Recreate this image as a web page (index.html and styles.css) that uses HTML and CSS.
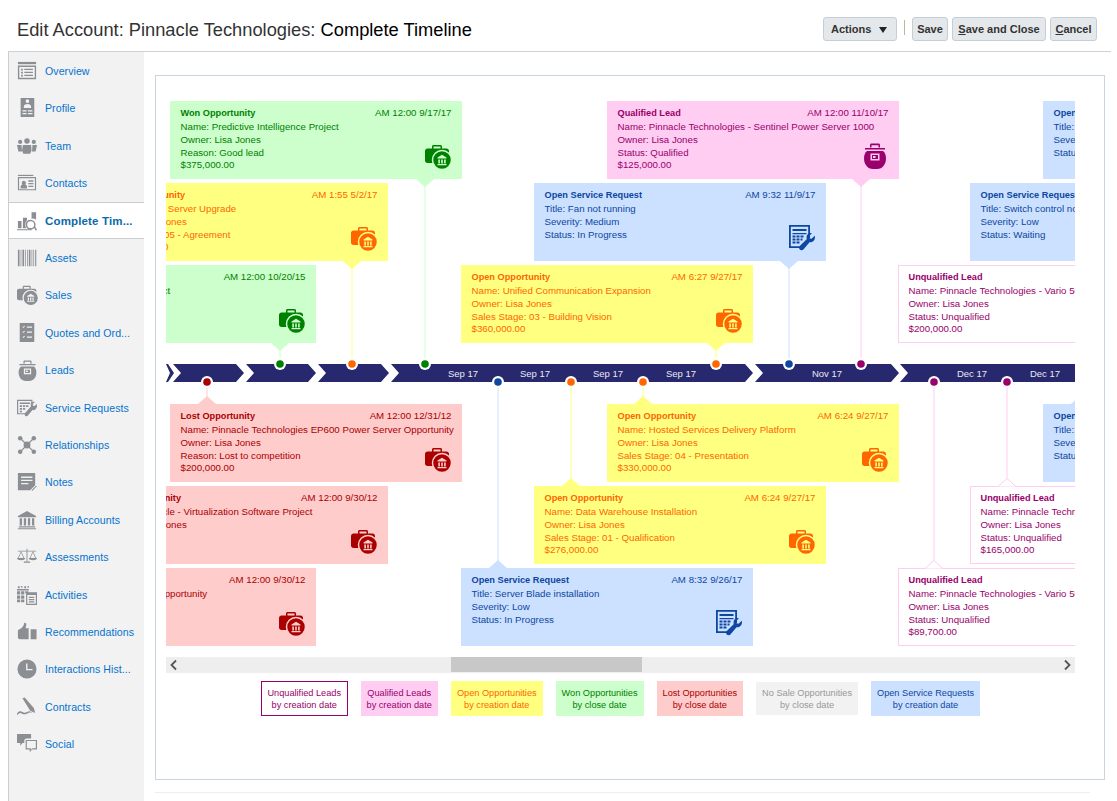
FILE: index.html
```html
<!DOCTYPE html>
<html lang="en">
<head>
    <meta charset="UTF-8">
    <meta name="viewport" content="width=device-width, initial-scale=1.0">
    <title>Edit Account: Complete Timeline</title>
    <link rel="stylesheet" href="styles.css">
</head>
<body>

    <!-- Shared icons -->
    <svg class="icon-defs" width="0" height="0">
        <defs>
            <symbol id="i-sale" viewBox="0 0 26 24">
                <path d="M7 4V1.5C7 .7 7.7 0 8.500 0h7c.8 0 1.500.7 1.500 1.500V4h-1.500V1.600h-7V4z"/>
                <path d="M2.500 3.500h19c1.400 0 2.500 1.100 2.500 2.500v12H2.500C1.100 18 0 16.900 0 15.500V6c0-1.400 1.100-2.500 2.500-2.500z"/>
                <circle cx="17" cy="15" r="9.500" stroke="var(--card-bg)" stroke-width="1.500"/>
                <path d="M12.500 12.500L17 9.800l4.500 2.700v1h-9zM13.300 14.500h1.600v4h-1.600zM16.200 14.500h1.600v4h-1.600zM19.100 14.500h1.600v4h-1.600zM12.500 19h9v1.200h-9z" fill="var(--card-bg)"/>
            </symbol>
            <symbol id="i-lead" viewBox="0 0 22 26">
                <path d="M6 4.500V2c0-.8.600-1.500 1.500-1.500h7c.9 0 1.500.7 1.500 1.500v2.500h-1.500V2.200h-7v2.300zM1 5h20v1.400H1z"/>
                <path d="M3 8h16c1.800 1.500 3 4 3 7.500 0 5.500-3.500 10.500-9 10.500H9c-5.500 0-9-5-9-10.500C0 12 1.200 9.500 3 8z"/>
                <path d="M6.500 10.500h9v7h-9zM8 12v4h6v-4zM9 13h2.500v2H9z" fill-rule="evenodd" fill="var(--card-bg)"/>
            </symbol>
            <symbol id="i-service" viewBox="0 0 26 26">
                <path d="M0 0h21v13h-1.800V1.800H1.800v19.400h9.700V23H0z"/>
                <path d="M3.500 4h14v2h-14zM3.500 8h14v1.200h-14zM3.500 10.500h3v2h-3zM7.500 10.500h3v2h-3zM11.500 10.500h3v2h-3zM3.500 13.500h3v2h-3zM7.500 13.500h3v2h-3zM11.500 13.500h2v2h-2zM3.500 16.500h3v2h-3zM7.500 16.500h3v2h-3z"/>
                <path d="M25.800 10.800l-3.300 3-2.100-.5-.5-2 3-3.100c-2.800-.7-5.400 1.300-5.400 4 0 .7.100 1.300.4 1.800L10.800 21c-1 1-1 2.500 0 3.500s2.600 1 3.600 0l6.100-7.300c3 .8 6.300-2 5.300-6.400z"/>
            </symbol>

            <symbol id="n-overview" viewBox="0 0 22 22">
                <path d="M1 1h20v2.500H1z"/>
                <path fill-rule="evenodd" d="M1 5h20v15H1zM2.500 6.500v12h17v-12z"/>
                <path d="M4.500 8.500h2v2h-2zM8 8.500h9.500v1.500H8zM4.500 11.800h2v2h-2zM8 11.800h9.500v1.500H8zM4.500 15h2v2h-2zM8 15h9.500v1.500H8z"/>
            </symbol>
            <symbol id="n-profile" viewBox="0 0 22 22">
                <path fill-rule="evenodd" d="M4 0h15v21H4zM9.500 3.500a2 2 0 1 0 4 0 2 2 0 1 0-4 0zM7.500 11h8V9.500c0-1.500-1.500-2.800-4-2.800s-4 1.300-4 2.800zM6 13.500v1.300h4.500v-1.300zM12 13.500v1.300h5v-1.300zM6 16.500v1.300h4.500v-1.300zM12 16.500v1.300h5v-1.300z"/>
            </symbol>
            <symbol id="n-team" viewBox="0 0 22 22">
                <circle cx="3.500" cy="6.500" r="2.300"/><circle cx="18.500" cy="6.500" r="2.300"/><circle cx="11" cy="5.500" r="3"/>
                <path d="M0 10h5l.5 7H1.500zM17 10h5l-1.500 7h-4zM6.500 10h9l.5 6-1.500 3.500h-7.500L5.500 16z"/>
            </symbol>
            <symbol id="n-contacts" viewBox="0 0 22 22">
                <path d="M1 2h17v1.300H1z"/>
                <path fill-rule="evenodd" d="M1 4.500h20V19H1zM2.300 5.800v12h17.400v-12zM4 17h7v-2c0-1.300-1-2.200-2-2.400a2.300 2.300 0 1 0-3 0c-1 .2-2 1.100-2 2.400z"/>
                <path d="M12.500 8h5.500v1.500h-5.500zM12.500 11h5.500v1.500h-5.500zM12.500 14h5.500v1.500h-5.500z"/>
            </symbol>
            <symbol id="n-timeline" viewBox="0 0 22 22">
                <path d="M1 11h4v8H1zM6.500 7.500h4.500v2.800a6 6 0 0 0-2 4.700c0 1.500.5 2.900 1.300 4H6.500zM16 1.500h5v8.200a6 6 0 0 0-5-1.200zM0 20h16v1.300H0z"/>
                <path fill-rule="evenodd" d="M15 9.500a5.500 5.500 0 1 1-.1 11 5.500 5.500 0 0 1 .1-11zM15 11.200a3.800 3.800 0 1 0 0 7.600 3.800 3.800 0 0 0 0-7.600z"/>
                <path d="M18.500 18l1.300-1.200 2.200 3.700-1.300 1.200z"/>
            </symbol>
            <symbol id="n-assets" viewBox="0 0 22 22">
                <path d="M1 2h1.800v18H1zM4 2h.8v18H4zM6 2h1.800v18H6zM9 2h.8v18H9zM11 2h.8v18H11zM13 2h1.800v18H13zM16 2h.8v18H16zM18 2h.8v18H18zM20 2h1.200v18H20z"/>
            </symbol>
            <symbol id="n-quotes" viewBox="0 0 22 22">
                <path fill-rule="evenodd" d="M3 0h16v21H3zM6 4.500l1 1 1.800-1.800-.6-.6L7 4.200l-.4-.4zM11 3.800v1.300h5.500V3.800zM6 10l1 1 1.800-1.800-.6-.6L7 9.700l-.4-.4zM11 9.300v1.300h5.500V9.300zM6 15.500l1 1 1.800-1.800-.6-.6L7 15.200l-.4-.4zM11 14.800v1.300h5.500v-1.300z"/>
            </symbol>
            <symbol id="n-service" viewBox="0 0 22 22">
                <path d="M0 2h17v9h-1.300V3.300H1.300v13.400h8V18H0z"/>
                <path d="M3 5h11.500v1.500H3zM3 8h2.500v1.800H3zM6.500 8H9v1.800H6.500zM10 8h2.500v1.800H10zM3 11h2.500v1.800H3zM6.500 11H9v1.800H6.500zM3 14h2.500v1.800H3z"/>
                <path d="M22 6.500l-2.700 2.300-1.800-.4-.4-1.600 2.500-2.500c-2.300-.6-4.500 1.100-4.500 3.300 0 .6.100 1.100.3 1.500L9 16.500c-.8.800-.8 2 0 2.900s2.200.8 3-.1l5-6c2.500.7 5.800-1.800 5-6.800z"/>
            </symbol>
            <symbol id="n-relationships" viewBox="0 0 22 22">
                <path d="M4.500 3.500L11 10 17.500 3.500l1 1L12 11l6.500 6.500-1 1L11 12l-6.500 6.500-1-1L10 11 3.500 4.500z"/>
                <circle cx="11" cy="11" r="3.800"/><circle cx="3.500" cy="3.500" r="2.500"/><circle cx="18.500" cy="3.500" r="2.500"/><circle cx="3.500" cy="18.500" r="2.500"/><circle cx="18.500" cy="18.500" r="2.500"/>
            </symbol>
            <symbol id="n-notes" viewBox="0 0 22 22">
                <path fill-rule="evenodd" d="M1 1h19v13.500L14.500 20H1zM4.500 5v1.500h12.500V5zM4.500 8.500V10h12.500V8.500zM4.500 12v1.500h8V12z"/>
                <path d="M16 20l5-5 .8.800-5 5z"/>
            </symbol>
            <symbol id="n-billing" viewBox="0 0 22 22">
                <path d="M11 1l10 5.500v1.500H1V6.500zM3 9h2.500v8H3zM7.500 9H10v8H7.500zM12 9h2.500v8H12zM16.500 9H19v8h-2.500zM2 18h18v1.300H2zM1 20h20v1.300H1z"/>
            </symbol>
            <symbol id="n-assessments" viewBox="0 0 22 22">
                <path d="M1 4h20v1H1zM10.500 2h1v14h-1z"/>
                <path d="M4.500 4.500L1 12h.9l2.600-6 2.600 6H8zM17.500 4.500L14 12h.9l2.600-6 2.600 6h.9z"/>
                <path d="M0 12h9c0 1.500-2 2.500-4.500 2.500S0 13.500 0 12zM13 12h9c0 1.500-2 2.500-4.500 2.500S13 13.500 13 12zM7.500 16h7v1.200h-7z"/>
            </symbol>
            <symbol id="n-activities" viewBox="0 0 22 22">
                <path d="M1 1.500h2v2H1zM4.500 1h1.500v2H4.500zM8 1.500h2v2H8zM11.500 1h1.500v2h-1.500z"/>
                <path d="M0 4.500h13V6H0zM0 7h3.500v3.500H0zM4.500 7H8v3.500H4.500zM9 7h3.500v2H9zM0 11.500h3.500V15H0zM4.500 11.500H8V15H4.500zM0 16h3.500v3H0zM4.500 16H8v3H4.500z"/>
                <path fill-rule="evenodd" d="M10 8h12v14H10zM11.300 11v9.700h9.400V11zM13 13h6v1.200h-6zM13 15.500h6v1.200h-6zM13 18h6v1.200h-6z"/>
            </symbol>
            <symbol id="n-recommendations" viewBox="0 0 22 22">
                <path d="M8 1c1.500-.4 2.500.6 2.200 2.200L9.500 7h3.300v12H3.500C2 19 1 18 1 16.500V10c0-1 .7-1.700 1.700-2 2.300-.8 4.800-3.500 5.300-7z"/>
                <path d="M15 8h6.500v11H15z"/>
            </symbol>
            <symbol id="n-interactions" viewBox="0 0 22 22">
                <path fill-rule="evenodd" d="M11 .5a10.500 10.500 0 1 1 0 21 10.500 10.500 0 0 1 0-21zM10 5v7.500h7V11h-5.500V5z"/>
            </symbol>
            <symbol id="n-contracts" viewBox="0 0 22 22">
                <path d="M6 1.500L8.500.5l10 11.500 1.500 5.500-5.500-2.500z"/>
                <path d="M0 18c2-2.500 4-2.800 6-1.500 2 1.300 3.500 1 5 0 2-1.200 3.500-.8 5 .5l1.500 1c-2-.5-3-1.500-5-.5s-4.500 2.500-7 .8C3.500 17 2 18 .5 20z"/>
            </symbol>
            <symbol id="n-social" viewBox="0 0 22 22">
                <path d="M0 0h15.500v5H10.500c-1.500 0-2.500 1-2.500 2.500v2.500H6L3.500 13v-3H0z"/>
                <path fill-rule="evenodd" d="M9.500 6.500H22V17h-5.500L14 20v-3H9.500zM10.800 7.800v7.900h4.500v1.500l1.700-1.500h3.700V7.800z"/>
            </symbol>
        </defs>
    </svg>

    <!-- Page title and buttons -->
    <header class="page-header">
        <h1 class="page-title">Edit Account: Pinnacle Technologies: <span class="page-title-current">Complete Timeline</span></h1>
        <div class="toolbar">
            <button class="btn btn-actions">Actions <span class="caret"></span></button>
            <span class="toolbar-sep"></span>
            <button class="btn btn-save">Save</button>
            <button class="btn btn-close"><u>S</u>ave and Close</button>
            <button class="btn btn-cancel"><u>C</u>ancel</button>
        </div>
    </header>

    <div class="page-body">
        <!-- Left tabs -->
        <nav class="side-nav">
            <a class="nav-item"><svg class="nav-icon"><use href="#n-overview"/></svg>Overview</a>
            <a class="nav-item"><svg class="nav-icon"><use href="#n-profile"/></svg>Profile</a>
            <a class="nav-item"><svg class="nav-icon"><use href="#n-team"/></svg>Team</a>
            <a class="nav-item"><svg class="nav-icon"><use href="#n-contacts"/></svg>Contacts</a>
            <a class="nav-item nav-item-active"><svg class="nav-icon"><use href="#n-timeline"/></svg>Complete Tim...</a>
            <a class="nav-item"><svg class="nav-icon"><use href="#n-assets"/></svg>Assets</a>
            <a class="nav-item"><svg class="nav-icon nav-icon-sale"><use href="#i-sale"/></svg>Sales</a>
            <a class="nav-item"><svg class="nav-icon"><use href="#n-quotes"/></svg>Quotes and Ord...</a>
            <a class="nav-item"><svg class="nav-icon nav-icon-sale"><use href="#i-lead"/></svg>Leads</a>
            <a class="nav-item"><svg class="nav-icon"><use href="#n-service"/></svg>Service Requests</a>
            <a class="nav-item"><svg class="nav-icon"><use href="#n-relationships"/></svg>Relationships</a>
            <a class="nav-item"><svg class="nav-icon"><use href="#n-notes"/></svg>Notes</a>
            <a class="nav-item"><svg class="nav-icon"><use href="#n-billing"/></svg>Billing Accounts</a>
            <a class="nav-item"><svg class="nav-icon"><use href="#n-assessments"/></svg>Assessments</a>
            <a class="nav-item"><svg class="nav-icon"><use href="#n-activities"/></svg>Activities</a>
            <a class="nav-item"><svg class="nav-icon"><use href="#n-recommendations"/></svg>Recommendations</a>
            <a class="nav-item"><svg class="nav-icon"><use href="#n-interactions"/></svg>Interactions Hist...</a>
            <a class="nav-item"><svg class="nav-icon"><use href="#n-contracts"/></svg>Contracts</a>
            <a class="nav-item"><svg class="nav-icon"><use href="#n-social"/></svg>Social</a>
        </nav>

        <main class="main">
            <section class="timeline-box">
                <div class="timeline">

                    <div class="card won row-a" style="left:4px">
                        <div class="card-head"><b>Won Opportunity</b><span>AM 12:00 9/17/17</span></div>
                        <div>Name: Predictive Intelligence Project</div>
                        <div>Owner: Lisa Jones</div>
                        <div>Reason: Good lead</div>
                        <div>$375,000.00</div>
                        <svg class="card-icon"><use href="#i-sale"/></svg>
                    </div>
                    <div class="card open row-b" style="left:-70px">
                        <div class="card-head"><b>Open Opportunity</b><span>AM 1:55 5/2/17</span></div>
                        <div>Name: Power Server Upgrade</div>
                        <div>Owner: Lisa Jones</div>
                        <div>Sales Stage: 05 - Agreement</div>
                        <div>$1,250,000.00</div>
                        <svg class="card-icon"><use href="#i-sale"/></svg>
                    </div>
                    <div class="card won row-c" style="left:-142px">
                        <div class="card-head"><b>Won Opportunity</b><span>AM 12:00 10/20/15</span></div>
                        <div>Name: Enterprise Blade Project</div>
                        <div>Owner: Lisa Jones</div>
                        <div>Reason: Price</div>
                        <div>$90,000.00</div>
                        <svg class="card-icon"><use href="#i-sale"/></svg>
                    </div>

                    <div class="card qualified row-a" style="left:441px">
                        <div class="card-head"><b>Qualified Lead</b><span>AM 12:00 11/10/17</span></div>
                        <div>Name: Pinnacle Technologies - Sentinel Power Server 1000</div>
                        <div>Owner: Lisa Jones</div>
                        <div>Status: Qualified</div>
                        <div>$125,000.00</div>
                        <svg class="card-icon card-icon-lead"><use href="#i-lead"/></svg>
                    </div>
                    <div class="card service row-b" style="left:368px">
                        <div class="card-head"><b>Open Service Request</b><span>AM 9:32 11/9/17</span></div>
                        <div>Title: Fan not running</div>
                        <div>Severity: Medium</div>
                        <div>Status: In Progress</div>
                        <svg class="card-icon card-icon-service"><use href="#i-service"/></svg>
                    </div>
                    <div class="card open row-c" style="left:295px">
                        <div class="card-head"><b>Open Opportunity</b><span>AM 6:27 9/27/17</span></div>
                        <div>Name: Unified Communication Expansion</div>
                        <div>Owner: Lisa Jones</div>
                        <div>Sales Stage: 03 - Building Vision</div>
                        <div>$360,000.00</div>
                        <svg class="card-icon"><use href="#i-sale"/></svg>
                    </div>

                    <div class="card service row-a" style="left:877px">
                        <div class="card-head"><b>Open Service Request</b><span>AM 9:40 12/1/17</span></div>
                        <div>Title: Power supply fault</div>
                        <div>Severity: High</div>
                        <div>Status: In Progress</div>
                    </div>
                    <div class="card service row-b" style="left:804px">
                        <div class="card-head"><b>Open Service Request</b><span>AM 9:40 12/1/17</span></div>
                        <div>Title: Switch control not responding</div>
                        <div>Severity: Low</div>
                        <div>Status: Waiting</div>
                    </div>
                    <div class="card unqualified row-c" style="left:732px">
                        <div class="card-head"><b>Unqualified Lead</b><span>AM 12:00 12/8/17</span></div>
                        <div>Name: Pinnacle Technologies - Vario 5000 Series</div>
                        <div>Owner: Lisa Jones</div>
                        <div>Status: Unqualified</div>
                        <div>$200,000.00</div>
                    </div>

                    <div class="card lost row-d" style="left:4px">
                        <div class="card-head"><b>Lost Opportunity</b><span>AM 12:00 12/31/12</span></div>
                        <div>Name: Pinnacle Technologies EP600 Power Server Opportunity</div>
                        <div>Owner: Lisa Jones</div>
                        <div>Reason: Lost to competition</div>
                        <div>$200,000.00</div>
                        <svg class="card-icon"><use href="#i-sale"/></svg>
                    </div>
                    <div class="card lost row-e" style="left:-70px">
                        <div class="card-head"><b>Lost Opportunity</b><span>AM 12:00 9/30/12</span></div>
                        <div>Name: Pinnacle - Virtualization Software Project</div>
                        <div>Owner: Lisa Jones</div>
                        <svg class="card-icon"><use href="#i-sale"/></svg>
                    </div>
                    <div class="card lost row-f" style="left:-142px">
                        <div class="card-head"><b>Lost Opportunity</b><span>AM 12:00 9/30/12</span></div>
                        <div>Name: Pinnacle Technology Opportunity</div>
                        <svg class="card-icon"><use href="#i-sale"/></svg>
                    </div>

                    <div class="card open row-d" style="left:441px">
                        <div class="card-head"><b>Open Opportunity</b><span>AM 6:24 9/27/17</span></div>
                        <div>Name: Hosted Services Delivery Platform</div>
                        <div>Owner: Lisa Jones</div>
                        <div>Sales Stage: 04 - Presentation</div>
                        <div>$330,000.00</div>
                        <svg class="card-icon"><use href="#i-sale"/></svg>
                    </div>
                    <div class="card open row-e" style="left:368px">
                        <div class="card-head"><b>Open Opportunity</b><span>AM 6:24 9/27/17</span></div>
                        <div>Name: Data Warehouse Installation</div>
                        <div>Owner: Lisa Jones</div>
                        <div>Sales Stage: 01 - Qualification</div>
                        <div>$276,000.00</div>
                        <svg class="card-icon"><use href="#i-sale"/></svg>
                    </div>
                    <div class="card service row-f" style="left:295px">
                        <div class="card-head"><b>Open Service Request</b><span>AM 8:32 9/26/17</span></div>
                        <div>Title: Server Blade installation</div>
                        <div>Severity: Low</div>
                        <div>Status: In Progress</div>
                        <svg class="card-icon card-icon-service"><use href="#i-service"/></svg>
                    </div>

                    <div class="card service row-d" style="left:877px">
                        <div class="card-head"><b>Open Service Request</b><span>AM 9:40 12/1/17</span></div>
                        <div>Title: Power supply fault</div>
                        <div>Severity: High</div>
                        <div>Status: In Progress</div>
                    </div>
                    <div class="card unqualified row-e" style="left:804px">
                        <div class="card-head"><b>Unqualified Lead</b><span>AM 12:00 12/8/17</span></div>
                        <div>Name: Pinnacle Technologies - Vario 5000</div>
                        <div>Owner: Lisa Jones</div>
                        <div>Status: Unqualified</div>
                        <div>$165,000.00</div>
                    </div>
                    <div class="card unqualified row-f" style="left:732px">
                        <div class="card-head"><b>Unqualified Lead</b><span>AM 12:00 12/8/17</span></div>
                        <div>Name: Pinnacle Technologies - Vario 5000 Series</div>
                        <div>Owner: Lisa Jones</div>
                        <div>Status: Unqualified</div>
                        <div>$89,700.00</div>
                    </div>

                    <!-- Axis, connectors and markers, in page coordinates -->
                    <svg class="axis" viewBox="166 91 909 566">
                        <g class="band">
                            <polygon points="166,364 168,364 174,373 168,382 166,382 170,373"/>
                            <polygon points="173,364 236,364 244,373 236,382 173,382 181,373"/>
                            <polygon points="246,364 308,364 316,373 308,382 246,382 254,373"/>
                            <polygon points="318,364 381,364 389,373 381,382 318,382 326,373"/>
                            <polygon points="391,364 745,364 753,373 745,382 391,382 399,373"/>
                            <polygon points="755,364 891,364 899,373 891,382 755,382 763,373"/>
                            <polygon points="900,364 1075,364 1075,382 900,382 908,373"/>
                        </g>
                        <g class="axis-dates">
                            <text x="463" y="377">Sep 17</text>
                            <text x="535" y="377">Sep 17</text>
                            <text x="608" y="377">Sep 17</text>
                            <text x="681" y="377">Sep 17</text>
                            <text x="827" y="377">Nov 17</text>
                            <text x="972" y="377">Dec 17</text>
                            <text x="1045" y="377">Dec 17</text>
                        </g>

                        <g class="link link-won">
                            <path class="arrow" d="M271 343h18l-9 8z"/><path d="M280 349V364"/>
                            <path class="arrow" d="M416 179h18l-9 8z"/><path d="M425 185V364"/>
                            <circle class="ring" cx="280" cy="364" r="6"/><circle class="dot" cx="280" cy="364" r="3.800"/>
                            <circle class="ring" cx="425" cy="364" r="6"/><circle class="dot" cx="425" cy="364" r="3.800"/>
                        </g>
                        <g class="link link-open">
                            <path class="arrow" d="M343 261h18l-9 8z"/><path d="M352 267V364"/>
                            <path class="arrow" d="M707 343h18l-9 8z"/><path d="M716 349V364"/>
                            <path class="arrow" d="M634 404h18l-9-8z"/><path d="M643 382V398"/>
                            <path class="arrow" d="M562 486h18l-9-8z"/><path d="M571 382V480"/>
                            <circle class="ring" cx="352" cy="364" r="6"/><circle class="dot" cx="352" cy="364" r="3.800"/>
                            <circle class="ring" cx="716" cy="364" r="6"/><circle class="dot" cx="716" cy="364" r="3.800"/>
                            <circle class="ring" cx="643" cy="382" r="6"/><circle class="dot" cx="643" cy="382" r="3.800"/>
                            <circle class="ring" cx="571" cy="382" r="6"/><circle class="dot" cx="571" cy="382" r="3.800"/>
                        </g>
                        <g class="link link-service">
                            <path class="arrow" d="M780 261h18l-9 8z"/><path d="M789 267V364"/>
                            <path class="arrow" d="M489 568h18l-9-8z"/><path d="M498 382V562"/>
                            <path class="arrow" d="M1071 404h18l-9-8z"/>
                            <circle class="ring" cx="789" cy="364" r="6"/><circle class="dot" cx="789" cy="364" r="3.800"/>
                            <circle class="ring" cx="498" cy="382" r="6"/><circle class="dot" cx="498" cy="382" r="3.800"/>
                        </g>
                        <g class="link link-lost">
                            <path class="arrow" d="M198 404h18l-9-8z"/><path d="M207 382V398"/>
                            <circle class="ring" cx="207" cy="382" r="6"/><circle class="dot" cx="207" cy="382" r="3.800"/>
                        </g>
                        <g class="link link-lead">
                            <path class="arrow" d="M852 179h18l-9 8z"/><path d="M861 185V364"/>
                            <path class="arrow arrow-outline" d="M998 486.500l9-8 9 8"/><path d="M1007 382V478"/>
                            <path class="arrow arrow-outline" d="M925 568.500l9-8 9 8"/><path d="M934 382V560"/>
                            <circle class="ring" cx="861" cy="364" r="6"/><circle class="dot" cx="861" cy="364" r="3.800"/>
                            <circle class="ring" cx="934" cy="382" r="6"/><circle class="dot" cx="934" cy="382" r="3.800"/>
                            <circle class="ring" cx="1007" cy="382" r="6"/><circle class="dot" cx="1007" cy="382" r="3.800"/>
                        </g>
                    </svg>
                </div>

                <div class="scrollbar">
                    <svg class="scroll-arrow" viewBox="0 0 16 16"><path d="M10 3.500L5.500 8 10 12.500"/></svg>
                    <div class="scroll-thumb"></div>
                    <svg class="scroll-arrow scroll-arrow-end" viewBox="0 0 16 16"><path d="M6 3.500L10.500 8 6 12.500"/></svg>
                </div>

                <div class="legend">
                    <div class="legend-item unqualified">Unqualified Leads<br>by creation date</div>
                    <div class="legend-item qualified">Qualified Leads<br>by creation date</div>
                    <div class="legend-item open">Open Opportunities<br>by creation date</div>
                    <div class="legend-item won">Won Opportunities<br>by close date</div>
                    <div class="legend-item lost">Lost Opportunities<br>by close date</div>
                    <div class="legend-item nosale">No Sale Opportunities<br>by close date</div>
                    <div class="legend-item service">Open Service Requests<br>by creation date</div>
                </div>
            </section>
            <div class="main-rule"></div>
        </main>
    </div>

</body>
</html>
```

FILE: styles.css
```css
html, body {
    height: 100%;
}

body {
    margin: 0;
    overflow: hidden;
    display: flex;
    flex-direction: column;
    font-family: "Liberation Sans", Arial, sans-serif;
    background-color: #fff;
    color: #333;
}

.icon-defs {
    position: absolute;
}

/* Header */
.page-header {
    display: flex;
    align-items: flex-start;
    justify-content: space-between;
    height: 51px;
    box-sizing: content-box;
    margin: 0 6px 0 8px;
    padding-left: 9px;
    padding-right: 14px;
    border-bottom: 1px solid #ccd2d6;
}

.page-title {
    margin: 19px 0 0;
    font-size: 18.3px;
    line-height: 21px;
    font-weight: normal;
    color: #333;
}

.page-title-current {
    color: #000;
}

.toolbar {
    display: flex;
    align-items: flex-start;
    gap: 4px;
    margin-top: 17px;
}

.btn {
    height: 24px;
    padding: 0;
    font-family: inherit;
    font-size: 11px;
    font-weight: bold;
    color: #333;
    background-color: #e4e8ea;
    border: 1px solid #c4ced7;
    border-radius: 3px;
}

.btn-actions {
    width: 74px;
    padding: 0 7px;
    text-align: left;
    white-space: nowrap;
}

.btn-save {
    width: 36px;
}

.btn-close {
    width: 94px;
}

.btn-cancel {
    width: 47px;
}

.caret {
    display: inline-block;
    margin-left: 5px;
    border-left: 4.5px solid transparent;
    border-right: 4.5px solid transparent;
    border-top: 6px solid #222;
}

.toolbar-sep {
    width: 1px;
    height: 15px;
    margin: 3px 3px 0;
    background-color: #b9b99a;
}

/* Side tabs */
.page-body {
    flex: 1;
    display: flex;
    min-height: 0;
}

.side-nav {
    width: 135px;
    margin-left: 8px;
    padding-top: 0.4px;
    border-left: 1px solid #c9ced2;
    background-color: #f2f2f2;
}

.nav-item {
    display: flex;
    align-items: center;
    gap: 8px;
    height: 37.4px;
    box-sizing: border-box;
    padding-left: 8px;
    font-size: 10.6px;
    letter-spacing: 0.05px;
    color: #0572ce;
    white-space: nowrap;
}

.nav-item-active {
    background-color: #fff;
    border-top: 1px solid #c9ced2;
    border-bottom: 1px solid #c9ced2;
    font-size: 11.5px;
    letter-spacing: 0.15px;
    font-weight: bold;
    color: #0a6aa8;
}

.nav-icon {
    flex: none;
    width: 20px;
    height: 20px;
    fill: #8b8e92;
    --card-bg: #f2f2f2;
}

.nav-icon-sale {
    width: 21px;
    height: 21px;
    margin-right: -1px;
}

/* Main area */
.main {
    flex: 1;
    min-width: 0;
    padding: 23px 12px 0 11px;
}

.timeline-box {
    height: 705px;
    box-sizing: border-box;
    padding: 15px 29px 0 10px;
    border: 1px solid #c9d4de;
}

.main-rule {
    margin: 12px 15px 0 0;
    border-top: 1px solid #eee;
}

.timeline {
    position: relative;
    height: 566px;
    overflow: hidden;
}

.axis {
    position: absolute;
    left: 0;
    top: 0;
    width: 909px;
    height: 566px;
}

.band {
    fill: #28286f;
}

.axis-dates {
    font-size: 9.5px;
    fill: #e8e8f2;
    text-anchor: middle;
}

.link path {
    fill: none;
    stroke-width: 1;
}

.link .arrow {
    stroke: none;
}

.link .arrow-outline {
    fill: #fff;
    stroke: #ffccf2;
    stroke-width: 1;
}

.link .ring {
    fill: #fff;
}

.link-won path { stroke: #ccffcc; }
.link-won .arrow { fill: #ccffcc; }
.link-won .dot { fill: #008000; }

.link-open path { stroke: #ffff80; }
.link-open .arrow { fill: #ffff80; }
.link-open .dot { fill: #ff6600; }

.link-service path { stroke: #cce0ff; }
.link-service .arrow { fill: #cce0ff; }
.link-service .dot { fill: #0d47a1; }

.link-lost path { stroke: #ffcccc; }
.link-lost .arrow { fill: #ffcccc; }
.link-lost .dot { fill: #aa0000; }

.link-lead path { stroke: #ffccf2; }
.link-lead .arrow { fill: #ffccf2; }
.link-lead .arrow-outline { fill: #fff; stroke: #ffccf2; }
.link-lead .dot { fill: #99006b; }

/* Timeline cards */
.card {
    position: absolute;
    width: 292px;
    height: 78px;
    box-sizing: border-box;
    padding: 6px 10.5px 0;
    background-color: var(--card-bg);
    color: var(--card-fg);
    font-size: 9.7px;
    line-height: 12.7px;
    white-space: nowrap;
}

.card-head {
    display: flex;
    justify-content: space-between;
    margin-bottom: 1.5px;
}

.card-head b {
    font-size: 9.2px;
}

.card-icon {
    position: absolute;
    right: 11px;
    bottom: 10px;
    width: 26px;
    height: 24px;
    fill: var(--card-fg);
}

.card-icon-lead {
    width: 22px;
    height: 26px;
    right: 13px;
}

.card-icon-service {
    width: 26px;
    height: 26px;
}

.row-a { top: 10px; }
.row-b { top: 92px; }
.row-c { top: 174px; }
.row-d { top: 313px; }
.row-e { top: 395px; }
.row-f { top: 477px; }

.won { --card-bg: #ccffcc; --card-fg: #008000; }
.open { --card-bg: #ffff80; --card-fg: #ff6600; }
.lost { --card-bg: #ffcccc; --card-fg: #aa0000; }
.qualified { --card-bg: #ffccf2; --card-fg: #99006b; }
.unqualified { --card-bg: #fff; --card-fg: #99006b; }
.service { --card-bg: #cce0ff; --card-fg: #0d47a1; }
.nosale { --card-bg: #f2f2f2; --card-fg: #999; }

.card.unqualified {
    border: 1px solid #ffccf2;
    padding: 5px 9.5px 0;
}

/* Scrollbar */
.scrollbar {
    display: flex;
    height: 16px;
    background-color: #eee;
}

.scroll-arrow {
    flex: none;
    width: 16px;
    height: 16px;
    fill: none;
    stroke: #555;
    stroke-width: 1.8;
}

.scroll-arrow-end {
    margin-left: auto;
}

.scroll-thumb {
    width: 191px;
    height: 15px;
    margin-left: 269px;
    background-color: #c8c8c8;
}

/* Legend */
.legend {
    display: flex;
    justify-content: center;
    gap: 13px;
    margin-top: 8px;
}

.legend-item {
    box-sizing: border-box;
    height: 35px;
    padding: 5.5px 6px;
    background-color: var(--card-bg);
    color: var(--card-fg);
    font-size: 9.2px;
    line-height: 12px;
    text-align: center;
    white-space: nowrap;
}

.legend-item.unqualified {
    border: 1px solid #99006b;
    padding: 4.5px 5.500px;
}

.legend-item.nosale {
    height: 33px;
    margin-top: 1px;
    padding-top: 4.5px;
}
```
